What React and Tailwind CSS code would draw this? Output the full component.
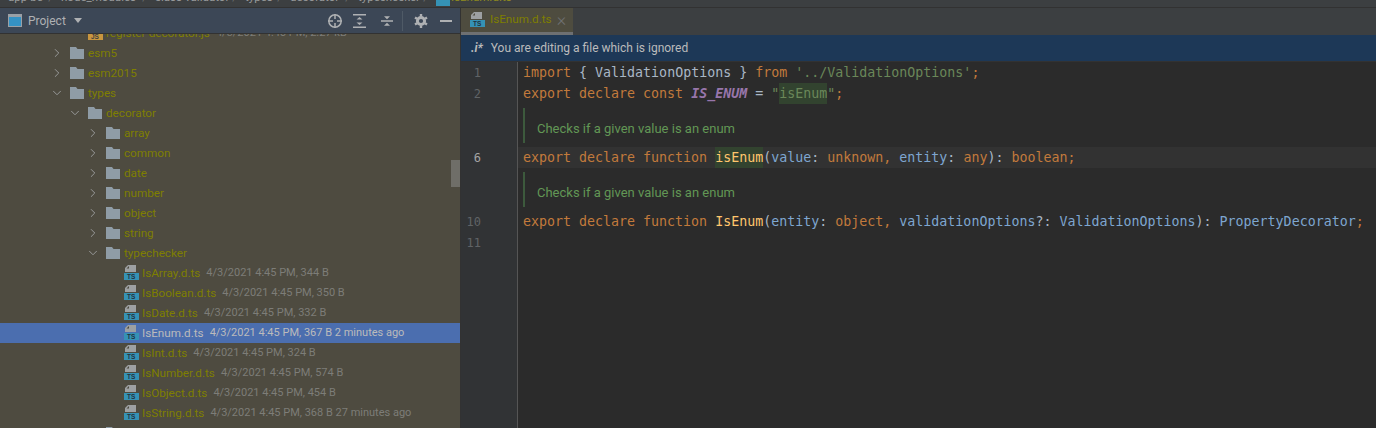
import { ChevronRight, ChevronDown } from 'lucide-react';

const sans = "font-['Roboto',sans-serif]";

const Folder = () => (
  <svg width="14" height="12" viewBox="0 0 14 12" className="shrink-0">
    <path d="M0 0h6l1.5 2H14v10H0z" fill="#8f9ca6" />
  </svg>
);

const TsIcon = ({ className = '' }) => (
  <svg width="16" height="16" viewBox="0 0 16 16" className={`shrink-0 ${className}`}>
    <path d="M4 0h8v7H1V3z" fill="#9da0a2" />
    <path d="M5 1v2.5H2.5z" fill="#4e4b3f" />
    <rect x="0" y="8" width="15" height="7" fill="#3592b5" />
    <text x="3" y="14" fontSize="6.5" fontWeight="700" fill="#23343d" fontFamily="Liberation Sans, sans-serif">TS</text>
  </svg>
);

const JsIcon = () => (
  <svg width="16" height="16" viewBox="0 0 16 16" className="shrink-0">
    <path d="M4 0h8v7H1V3z" fill="#9da0a2" />
    <rect x="0" y="8" width="15" height="7" fill="#c9963f" />
    <text x="3" y="14" fontSize="6.5" fontWeight="700" fill="#3c3f41" fontFamily="Liberation Sans, sans-serif">JS</text>
  </svg>
);

const treeRows = [
  { kind: 'js', name: 'register-decorator.js', meta: '4/3/2021 4:45 PM, 2.27 kB', pad: 'pl-[88px]' },
  { kind: 'closed', name: 'esm5', pad: 'pl-[50px]' },
  { kind: 'closed', name: 'esm2015', pad: 'pl-[50px]' },
  { kind: 'open', name: 'types', pad: 'pl-[50px]' },
  { kind: 'open', name: 'decorator', pad: 'pl-[68px]' },
  { kind: 'closed', name: 'array', pad: 'pl-[86px]' },
  { kind: 'closed', name: 'common', pad: 'pl-[86px]' },
  { kind: 'closed', name: 'date', pad: 'pl-[86px]' },
  { kind: 'closed', name: 'number', pad: 'pl-[86px]' },
  { kind: 'closed', name: 'object', pad: 'pl-[86px]' },
  { kind: 'closed', name: 'string', pad: 'pl-[86px]' },
  { kind: 'open', name: 'typechecker', pad: 'pl-[86px]' },
  { kind: 'ts', name: 'IsArray.d.ts', meta: '4/3/2021 4:45 PM, 344 B', pad: 'pl-[124px]' },
  { kind: 'ts', name: 'IsBoolean.d.ts', meta: '4/3/2021 4:45 PM, 350 B', pad: 'pl-[124px]' },
  { kind: 'ts', name: 'IsDate.d.ts', meta: '4/3/2021 4:45 PM, 332 B', pad: 'pl-[124px]' },
  { kind: 'ts', name: 'IsEnum.d.ts', meta: '4/3/2021 4:45 PM, 367 B 2 minutes ago', pad: 'pl-[124px]', selected: true },
  { kind: 'ts', name: 'IsInt.d.ts', meta: '4/3/2021 4:45 PM, 324 B', pad: 'pl-[124px]' },
  { kind: 'ts', name: 'IsNumber.d.ts', meta: '4/3/2021 4:45 PM, 574 B', pad: 'pl-[124px]' },
  { kind: 'ts', name: 'IsObject.d.ts', meta: '4/3/2021 4:45 PM, 454 B', pad: 'pl-[124px]' },
  { kind: 'ts', name: 'IsString.d.ts', meta: '4/3/2021 4:45 PM, 368 B 27 minutes ago', pad: 'pl-[124px]' },
];

const TreeRow = ({ row }) => {
  const isFolder = row.kind === 'open' || row.kind === 'closed';
  return (
    <div className={`h-5 shrink-0 flex items-center text-[11.7px] ${row.pad} ${row.selected ? 'bg-[#4b6eaf]' : ''}`}>
      {isFolder && (
        <span className="w-5 shrink-0 flex items-center text-[#a0a2a4]">
          {row.kind === 'open' ? <ChevronDown size={14} strokeWidth={1.5} /> : <ChevronRight size={14} strokeWidth={1.5} />}
        </span>
      )}
      {isFolder && <Folder />}
      {row.kind === 'ts' && <TsIcon />}
      {row.kind === 'js' && <JsIcon />}
      <span className={`pt-[1px] ${isFolder ? 'ml-1' : 'ml-[2px]'} ${row.selected ? 'text-[#bbbbbb]' : 'text-[#7f7f00]'}`}>{row.name}</span>
      {row.meta && <span className={`pt-[1px] ml-[6px] text-[11px] ${row.selected ? 'text-[#bbbbbb]' : 'text-[#7d7d78]'}`}>{row.meta}</span>}
    </div>
  );
};

const ToolIcons = () => (
  <div className="flex items-center text-[#afb1b3]">
    <svg width="16" height="16" viewBox="0 0 16 16" className="mr-[10px]" fill="none" stroke="currentColor" strokeWidth="1.5">
      <circle cx="8" cy="8" r="6.2" />
      <path d="M8 1v5M8 10v5M1 8h5M10 8h5" />
    </svg>
    <svg width="14" height="14" viewBox="0 0 14 14" className="mr-[13px]" fill="currentColor">
      <path d="M0 0h13v1.5H0zM0 12.5h13V14H0zM6.5 3l3 2.6h-6zM6.5 11l-3-2.6h6z" />
    </svg>
    <svg width="14" height="14" viewBox="0 0 14 14" className="mr-[8px]" fill="currentColor">
      <path d="M1 6.3h12v1.4H1zM7 5.2L4 2.2h6zM7 8.8l3 3H4z" />
    </svg>
    <div className="w-px h-5 bg-[#4f5a66] mr-[11px]" />
    <svg width="14" height="14" viewBox="0 0 14 14" className="mr-[12px]" fill="none" stroke="currentColor">
      <circle cx="7" cy="7" r="3.6" strokeWidth="3" />
      <path d="M7 0v2.5M7 11.5V14M1 3.5l2 1.2M11 9.3l2 1.2M1 10.5l2-1.2M11 4.7l2-1.2" strokeWidth="2.4" />
    </svg>
    <div className="w-3 h-[2px] bg-current" />
  </div>
);

const crumbs = [
  { label: 'app-be', w: 'w-[53px]' },
  { label: 'node_modules', w: 'w-[94px]' },
  { label: 'class-validator', w: 'w-[90px]' },
  { label: 'types', w: 'w-[45px]' },
  { label: 'decorator', w: 'w-[68px]' },
  { label: 'typechecker', w: 'w-[78px]' },
];

const Crumbs = () => (
  <div className="h-2 shrink-0 bg-[#3c3f41] border-b border-[#323232] overflow-hidden flex items-end whitespace-nowrap text-[11.5px] text-[#9a9c9e] pl-[8px] pb-[1px]">
    {crumbs.map((c) => (
      <div key={c.label} className={`${c.w} shrink-0 flex justify-between pr-[8px]`}>
        <span>{c.label}</span>
        <span className="text-[#6d6f71]">/</span>
      </div>
    ))}
    <span className="w-[14px] h-[7px] bg-[#3592b5] shrink-0" />
    <span className="ml-[1px] text-[#8f8a1e]">IsEnum.d.ts</span>
  </div>
);

const Sidebar = () => (
  <div className="relative w-[460px] shrink-0 h-full flex flex-col bg-[#4e4b40] border-r border-[#323232] box-content overflow-hidden">
    <div className="relative z-10 h-[26px] shrink-0 bg-[#3c4756] border-b border-[#323232] flex items-center justify-between pl-[8px] pr-[8px]">
      <div className="flex items-center text-[12px] text-[#afb1b3]">
        <div className="w-[14px] h-[13px] border-[1.5px] border-t-[3px] border-[#9aa0a6] bg-[#3592c4] mr-[6px]" />
        <span>Project</span>
        <span className="ml-[8px] w-0 h-0 border-x-[4px] border-x-transparent border-t-[5px] border-t-[#afb1b3]" />
      </div>
      <ToolIcons />
    </div>
    <div className="flex flex-col -mt-[11px]">
      {treeRows.map((row) => <TreeRow key={row.name} row={row} />)}
      <TreeRow row={{ kind: 'closed', name: 'validators', pad: 'pl-[86px]' }} />
    </div>
    <div className="absolute right-0 top-[152px] w-[9px] h-[27px] bg-[#6f6e68]" />
  </div>
);

const kw = 'text-[#c27a3c]';
const id = 'text-[#a9b7c6]';
const blue = 'text-[#7ea6d0]';

const CodeLine = ({ children, active }) => (
  <div className={`h-[21px] shrink-0 flex items-center whitespace-pre pl-[5px] ${active ? 'bg-[#323232]' : ''}`}>
    <span>{children}</span>
  </div>
);

const DocBlock = () => (
  <div className="h-[43px] shrink-0 pl-[5px] flex items-center">
    <div className={`h-[35px] border-l-2 border-[#3d5a3d] pl-[12px] pt-[12px] text-[13px] leading-[17px] text-[#629755] ${sans}`}>
      Checks if a given value is an enum
    </div>
  </div>
);

const gutter = [
  { n: '1', h: 'h-[21px]' },
  { n: '2', h: 'h-[21px]' },
  { n: '', h: 'h-[43px]' },
  { n: '6', h: 'h-[21px]', active: true },
  { n: '', h: 'h-[43px]' },
  { n: '10', h: 'h-[21px]' },
  { n: '11', h: 'h-[21px]' },
];

const Editor = () => (
  <div className="flex-1 min-w-0 h-full flex flex-col bg-[#2b2b2b]">
    <div className="h-[27px] shrink-0 bg-[#3c3f41] flex items-stretch">
      <div className="w-[112px] bg-[#4e4c3f] border-b-[3px] border-[#6e7072] flex items-center pl-[9px] text-[11.7px]">
        <TsIcon />
        <span className="ml-[4px] text-[#7f7f00]">IsEnum.d.ts</span>
        <span className="ml-[5px] text-[#6f7072] text-[18px] font-light leading-none">×</span>
      </div>
    </div>
    <div className="h-[27px] shrink-0 bg-[#1d3857] border-b border-[#323232] flex items-center pl-[10px] text-[12px] text-[#bbbbbb]">
      <span className="font-bold italic mr-[8px]">.i*</span>
      <span>You are editing a file which is ignored</span>
    </div>
    <div className="flex-1 flex min-h-0">
      <div className="w-[56px] shrink-0 bg-[#313335] border-r border-[#555555] box-content flex flex-col font-['DejaVu_Sans_Mono',monospace] text-[12px] text-[#606366]">
        {gutter.map((g, i) => (
          <div key={i} className={`${g.h} shrink-0 flex items-center w-[20px] justify-end ${g.active ? 'text-[#a4a3a3] w-[19px]' : ''}`}>{g.n}</div>
        ))}
      </div>
      <div className="flex-1 min-w-0 flex flex-col font-['DejaVu_Sans_Mono',monospace] text-[13.3px] text-[#a9b7c6]">
        <CodeLine>
          <span className={kw}>import</span> {'{ '}<span className={id}>ValidationOptions</span>{' } '}<span className={kw}>from</span> <span className="text-[#6a8759]">'../ValidationOptions'</span><span className={kw}>;</span>
        </CodeLine>
        <CodeLine>
          <span className={kw}>export declare const</span> <span className="text-[#9876aa] italic font-bold">IS_ENUM</span> = <span className="text-[#6a8759]">"<span className="bg-[#32432f] py-[3px]">isEnum</span>"</span><span className={kw}>;</span>
        </CodeLine>
        <DocBlock />
        <CodeLine active>
          <span className={kw}>export declare function</span> <span className="text-[#ffc66d] bg-[#32432f] py-[3px]">isEnum</span>(<span className={blue}>value</span>: <span className={kw}>unknown,</span> <span className={blue}>entity</span>: <span className={kw}>any</span>): <span className={kw}>boolean;</span>
        </CodeLine>
        <DocBlock />
        <CodeLine>
          <span className={kw}>export declare function</span> <span className="text-[#ffc66d]">IsEnum</span>(<span className={blue}>entity</span>: <span className={kw}>object,</span> <span className={blue}>validationOptions</span>?: <span className={blue}>ValidationOptions</span>): <span className={blue}>PropertyDecorator</span><span className={kw}>;</span>
        </CodeLine>
        <CodeLine />
      </div>
    </div>
  </div>
);

export default function App() {
  return (
    <div className={`w-[1376px] h-[428px] overflow-hidden flex flex-col bg-[#2b2b2b] ${sans}`}>
      <Crumbs />
      <div className="flex-1 min-h-0 flex">
        <Sidebar />
        <Editor />
      </div>
    </div>
  );
}
